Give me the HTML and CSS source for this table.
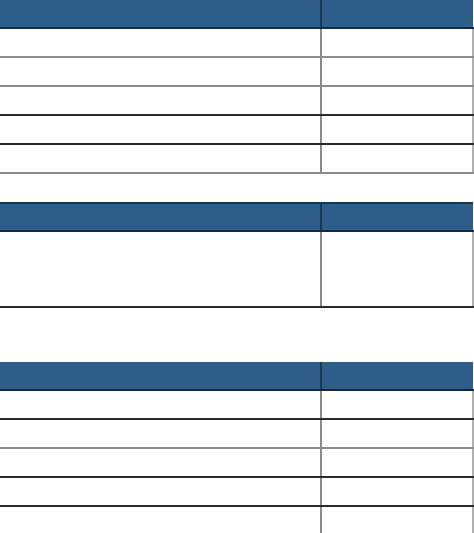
FILE: index.html
```html
<!DOCTYPE html>
<html>
<head>
<meta charset="utf-8">
<link rel="stylesheet" href="styles.css">
</head>
<body>
<div class="page">
  <table class="tbl t1">
    <thead><tr><th class="c1"></th><th class="c2"></th></tr></thead>
    <tbody>
      <tr class="g"><td class="c1"></td><td class="c2"></td></tr>
      <tr class="g"><td class="c1"></td><td class="c2"></td></tr>
      <tr class="d"><td class="c1"></td><td class="c2"></td></tr>
      <tr class="d"><td class="c1"></td><td class="c2"></td></tr>
      <tr class="g"><td class="c1"></td><td class="c2"></td></tr>
    </tbody>
  </table>

  <table class="tbl t2">
    <thead><tr><th class="c1"></th><th class="c2"></th></tr></thead>
    <tbody>
      <tr class="d tall"><td class="c1"></td><td class="c2"></td></tr>
    </tbody>
  </table>

  <table class="tbl t3">
    <thead><tr><th class="c1"></th><th class="c2"></th></tr></thead>
    <tbody>
      <tr class="d"><td class="c1"></td><td class="c2"></td></tr>
      <tr class="g"><td class="c1"></td><td class="c2"></td></tr>
      <tr class="d"><td class="c1"></td><td class="c2"></td></tr>
      <tr class="d"><td class="c1"></td><td class="c2"></td></tr>
      <tr class="d"><td class="c1"></td><td class="c2"></td></tr>
    </tbody>
  </table>
</div>
</body>
</html>
```

FILE: styles.css
```css
html, body {
  margin: 0;
  padding: 0;
  background: #ffffff;
  font-family: "Liberation Sans", Arial, sans-serif;
  overflow: hidden;
}

.page {
  width: 474px;
  height: 533px;
  overflow: hidden;
}

.tbl {
  width: 474px;
  border-collapse: collapse;
  table-layout: fixed;
}

.tbl th,
.tbl td {
  padding: 0;
  box-sizing: border-box;
}

.tbl .c1 {
  width: 321px;
}

.tbl thead th {
  height: 28px;
  background: #2d5e89;
  border-bottom: 2px solid #18293d;
}

.tbl thead th.c1 {
  border-right: 2px solid #1d3652;
}

.tbl tbody td {
  height: 29px;
  background: #ffffff;
}

.tbl tbody td.c1 {
  border-right: 2px solid #8a8a8a;
}

.tbl tbody td.c2 {
  border-right: 2px solid #b0b0b0;
}

.tbl tbody tr.g td {
  border-bottom: 2px solid #8c8c8c;
}

.tbl tbody tr.d td {
  border-bottom: 2px solid #2a2a2a;
}

.tbl tbody tr.tall td {
  height: 76px;
}

.t2 {
  margin-top: 28px;
}

.t2 thead th {
  border-top: 2px solid #1d3550;
}

.t3 {
  margin-top: 54px;
}
```
